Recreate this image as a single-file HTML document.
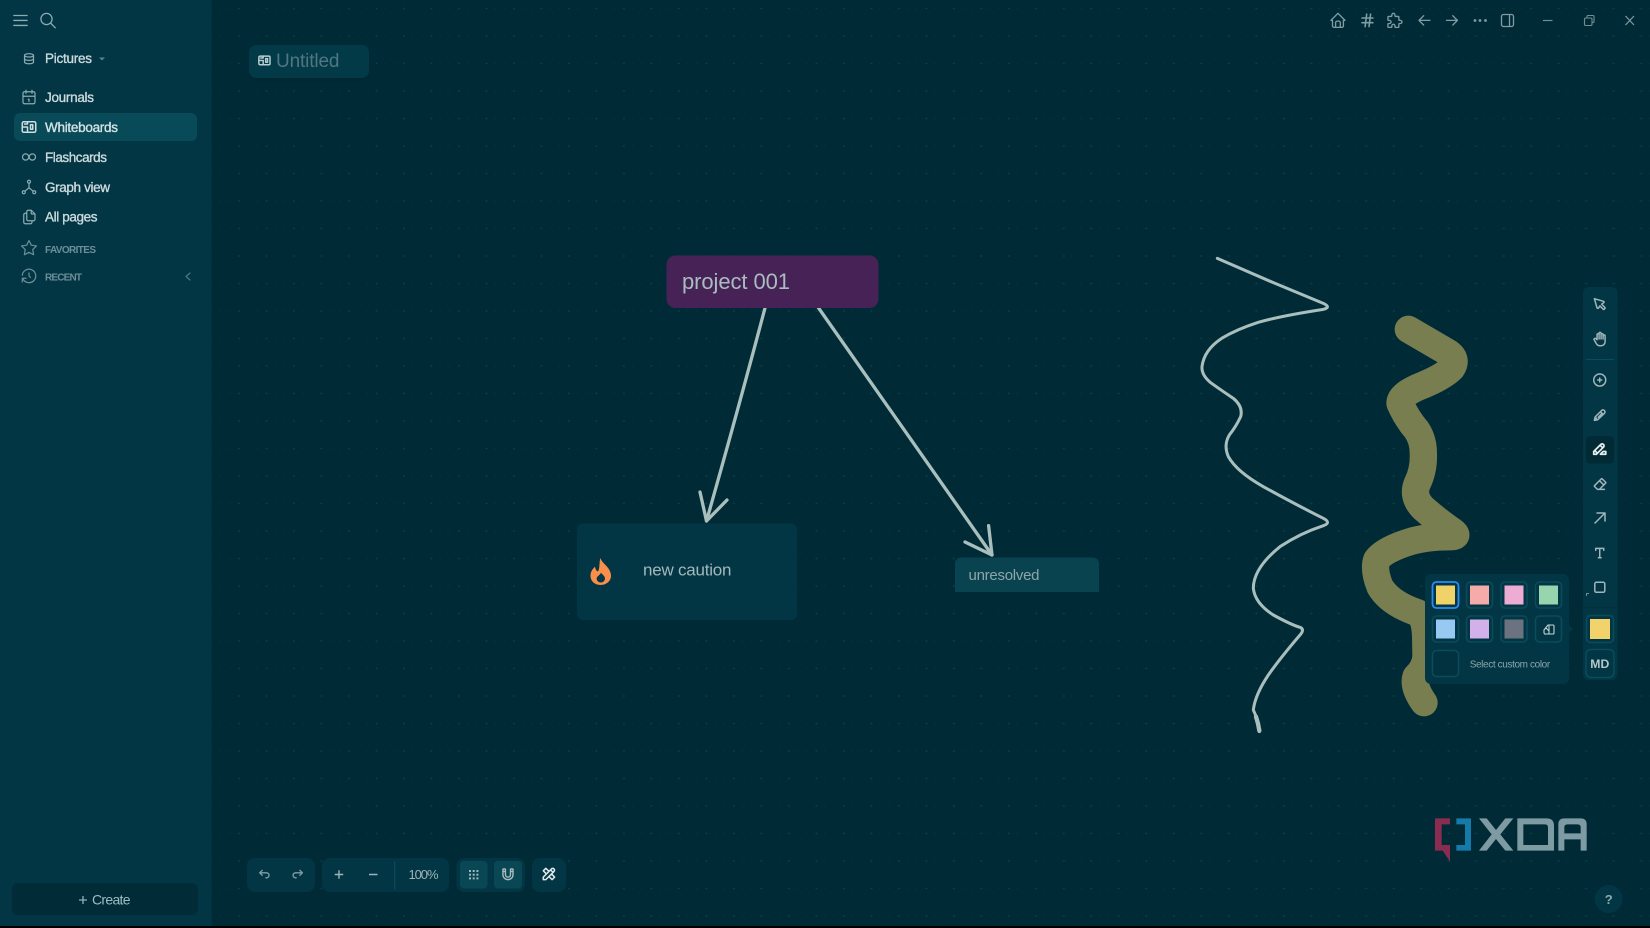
<!DOCTYPE html>
<html lang="en">
<head>
<meta charset="utf-8">
<title>Whiteboard</title>
<style>
html,body{margin:0;padding:0;width:1650px;height:928px;overflow:hidden;background:#000}
#bg{position:absolute;left:212px;top:0;width:1438px;height:926px;background-color:#002b36;
background-image:radial-gradient(circle at center,#0a4551 0,#0a4551 .5px,transparent 1px),radial-gradient(circle at center,#05343f 0,#05343f .4px,transparent .9px);
background-size:27.5px 27.5px,9.17px 27.5px;background-position:13.25px -5.25px,4px -5.25px}
svg{position:absolute;left:0;top:0;filter:blur(.35px)}
text{font-family:"Liberation Sans",sans-serif}
.side{font-size:13.5px;fill:#cbdadd;stroke:#cbdadd;stroke-width:.35px}
.sec{font-size:10px;font-weight:700;fill:#6c8f97}
.i{fill:none;stroke:#8dabb1;stroke-width:1.6;stroke-linecap:round;stroke-linejoin:round}
.t{fill:none;stroke:#7f9da3;stroke-width:1.7;stroke-linecap:round;stroke-linejoin:round}
.b{fill:none;stroke:#a9bdc0;stroke-width:2.2;stroke-linecap:round;stroke-linejoin:round}
.sw{fill:#023644;stroke:#0a4c5c;stroke-width:1.5}
</style>
</head>
<body>
<div id="bg"></div>
<svg width="1650" height="928" viewBox="0 0 1650 928" xmlns="http://www.w3.org/2000/svg">
<rect x="0" y="0" width="212" height="926" fill="#023644"/>
<rect x="211" y="0" width="1" height="926" fill="#02303c"/>
<rect x="14" y="113" width="183" height="28" rx="6" fill="#094a59"/>
<g class="i" transform="translate(10.5,10.5) scale(.83)"><path d="M4 6h16M4 12h16M4 18h16"/></g>
<g class="i" transform="translate(38.5,11) scale(.8)"><circle cx="10" cy="10" r="7"/><path d="M21 21l-6 -6"/></g>
<g class="i" transform="translate(22.3,52) scale(.56)" style="stroke-width:2.2"><ellipse cx="12" cy="6" rx="8" ry="3"/><path d="M4 6v6a8 3 0 0 0 16 0v-6"/><path d="M4 12v6a8 3 0 0 0 16 0v-6"/></g>
<text x="45" y="63" class="side" textLength="47" lengthAdjust="spacing">Pictures</text>
<path d="M99 57.5h6l-3 3z" fill="#5f8088"/>
<g class="i" transform="translate(20,88) scale(.75)"><path d="M4 7a2 2 0 0 1 2 -2h12a2 2 0 0 1 2 2v12a2 2 0 0 1 -2 2h-12a2 2 0 0 1 -2 -2v-12zM16 3v4M8 3v4M4 11h16M11 15h1v3"/></g>
<text x="45" y="102" class="side" textLength="49" lengthAdjust="spacing">Journals</text>
<g class="i" transform="translate(20,118) scale(.75)" style="stroke:#cfdde0;stroke-width:2"><rect x="3" y="5" width="18" height="14" rx="2"/><path d="M3 12h7v7M10 5v3H6M14 9h3v6h-3z"/></g>
<text x="45" y="132" class="side" textLength="73" lengthAdjust="spacing" style="fill:#d5e2e4;stroke:#d5e2e4">Whiteboards</text>
<g class="i" transform="translate(20,148) scale(.75)"><circle cx="7.5" cy="12" r="4.2"/><circle cx="16.5" cy="12" r="4.2"/></g>
<text x="45" y="162" class="side" textLength="62" lengthAdjust="spacing">Flashcards</text>
<g class="i" transform="translate(20,178) scale(.75)"><circle cx="12" cy="5" r="2"/><circle cx="5" cy="19" r="2"/><circle cx="19" cy="19" r="2"/><path d="M12 7v6M12 13l-5.5 4.6M12 13l5.5 4.6"/></g>
<text x="45" y="192" class="side" textLength="65" lengthAdjust="spacing">Graph view</text>
<g class="i" transform="translate(20,208) scale(.75)"><path d="M15 3v4a1 1 0 0 0 1 1h4M18 17h-7a2 2 0 0 1 -2 -2v-10a2 2 0 0 1 2 -2h4l5 5v7a2 2 0 0 1 -2 2zM16 17v2a2 2 0 0 1 -2 2h-7a2 2 0 0 1 -2 -2v-10a2 2 0 0 1 2 -2h2"/></g>
<text x="45" y="221.5" class="side" textLength="52.5" lengthAdjust="spacing">All pages</text>
<g class="i" transform="translate(20,239) scale(.75)" style="stroke:#6c8f97"><path d="M12 17.75l-6.172 3.245l1.179 -6.873l-5 -4.867l6.9 -1l3.086 -6.253l3.086 6.253l6.9 1l-5 4.867l1.179 6.873z"/></g>
<text x="45" y="253" class="sec" textLength="51" lengthAdjust="spacing">FAVORITES</text>
<g class="i" transform="translate(20,267) scale(.75)" style="stroke:#6c8f97"><path d="M12 8l0 4l2 2M3.05 11a9 9 0 1 1 .5 4m-.5 5v-5h5"/></g>
<text x="45" y="280.5" class="sec" textLength="37" lengthAdjust="spacing">RECENT</text>
<path d="M190 273l-4 3.5l4 3.5" fill="none" stroke="#4f7680" stroke-width="1.2" stroke-linecap="round" stroke-linejoin="round"/>
<rect x="12" y="883" width="186" height="32" rx="6" fill="#012b37"/>
<path d="M79 900h8M83 896v8" stroke="#8fb0b8" stroke-width="1.3" fill="none"/>
<text x="92" y="904.5" font-size="14" fill="#9dbdc5" textLength="38.5" lengthAdjust="spacing">Create</text>

<rect x="249" y="48" width="120" height="33" rx="7" fill="#002530" opacity=".6"/>
<rect x="249" y="45" width="120" height="33" rx="7" fill="#033a47"/>
<g class="i" transform="translate(257,53) scale(.62)" style="stroke:#b7cdd0;stroke-width:2.4"><rect x="3" y="5" width="18" height="14" rx="2"/><path d="M3 12h7v7M10 5v3H6M14 9h3v6h-3z"/></g>
<text x="276" y="67" font-size="19" fill="#4f7682" textLength="63.5" lengthAdjust="spacing">Untitled</text>

<g class="t" transform="translate(1328.6,11) scale(.78)"><path d="M5 12l-2 0l9 -9l9 9l-2 0M5 12v7a2 2 0 0 0 2 2h10a2 2 0 0 0 2 -2v-7M9 21v-6a2 2 0 0 1 2 -2h2a2 2 0 0 1 2 2v6"/></g>
<g class="t" transform="translate(1358.1,11) scale(.78)" style="stroke-width:2"><path d="M5 9h14M5 15h14M11 4l-2 16M16 4l-2 16"/></g>
<g class="t" transform="translate(1385.6,11) scale(.78)"><path d="M4 7h3a1 1 0 0 0 1 -1v-1a2 2 0 0 1 4 0v1a1 1 0 0 0 1 1h3a1 1 0 0 1 1 1v3a1 1 0 0 0 1 1h1a2 2 0 0 1 0 4h-1a1 1 0 0 0 -1 1v3a1 1 0 0 1 -1 1h-3a1 1 0 0 1 -1 -1v-1a2 2 0 0 0 -4 0v1a1 1 0 0 1 -1 1h-3a1 1 0 0 1 -1 -1v-3a1 1 0 0 1 1 -1h1a2 2 0 0 0 0 -4h-1a1 1 0 0 1 -1 -1v-3a1 1 0 0 1 1 -1"/></g>
<g class="t" transform="translate(1415.1,11) scale(.78)"><path d="M5 12h14M5 12l6 6M5 12l6 -6"/></g>
<g class="t" transform="translate(1442.6,11) scale(.78)"><path d="M5 12h14M13 18l6 -6M13 6l6 6"/></g>
<g fill="#7f9da3"><circle cx="1475" cy="20.5" r="1.4"/><circle cx="1480" cy="20.5" r="1.4"/><circle cx="1485.5" cy="20.5" r="1.4"/></g>
<rect x="1501.5" y="14.5" width="12" height="12" rx="2" fill="none" stroke="#7f9da3" stroke-width="1.3"/>
<path d="M1509.5 14.5v12" stroke="#7f9da3" stroke-width="1.3"/>
<path d="M1543 20.5h9.5" stroke="#6f8e95" stroke-width="1.2"/>
<rect x="1584.5" y="18" width="7.5" height="7.5" rx="1.2" fill="none" stroke="#6f8e95" stroke-width="1.1"/>
<path d="M1587 17.5v-1a1 1 0 0 1 1 -1h5a1 1 0 0 1 1 1v5a1 1 0 0 1 -1 1h-1" fill="none" stroke="#6f8e95" stroke-width="1.1"/>
<path d="M1625.5 16l8.5 9M1634 16l-8.5 9" stroke="#7f9da3" stroke-width="1.2"/>

<g fill="none" stroke="#a9bfbd" stroke-width="3.3" stroke-linecap="round" stroke-linejoin="round">
<path d="M765 308Q738 410 706.5 521"/>
<path d="M700 492L706.5 521L727 500"/>
<path d="M818.6 308L992 555"/>
<path d="M988.6 525.7L992 555L965 542"/>
</g>

<rect x="666.5" y="255.5" width="212" height="52.5" rx="9" fill="#472256"/>
<text x="682" y="289" font-size="22" fill="#a9bcbf" textLength="108" lengthAdjust="spacing">project 001</text>
<rect x="577" y="523.5" width="220" height="96.5" rx="6" fill="#033644"/>
<g transform="translate(600.5,557.7) scale(1,.91) translate(-600.5,-580)">
<path d="M600.5 580C601 586 611 590 611 600C611 606 606 610 600.5 610C595 610 590.5 606 590.5 600C590.5 595 593 592 595 590C595.5 593 596.5 595 598 595C600 592 599 585 600.5 580Z" fill="#f98f49"/>
<path d="M601 596.5C603 599 605 600.5 605 603a4.2 4.2 0 0 1 -8.4 0C596.600 600.5 599.5 599.5 601 596.5Z" fill="#033644"/>
</g>
<text x="643" y="575.5" font-size="17" fill="#a3b8bb" textLength="88.5" lengthAdjust="spacing">new caution</text>
<path d="M955 592v-28.5a6 6 0 0 1 6 -6h132a6 6 0 0 1 6 6v28.500z" fill="#0a4350"/>
<text x="968.5" y="580" font-size="15" fill="#8ea5a8" textLength="71" lengthAdjust="spacing">unresolved</text>

<g transform="translate(1180,240) scale(.33333)" fill="none" stroke-linecap="round" stroke-linejoin="round">
<path stroke="#a9bfbd" stroke-width="9" d="M112 55L280 128L430 190Q455 202 430 208Q300 228 235 247Q170 268 125 295Q72 330 66 380Q64 405 92 428Q130 455 160 475Q190 500 182 530Q168 560 148 585Q130 615 145 650Q170 695 250 740Q350 795 430 835Q455 848 430 857Q360 880 300 920Q220 985 220 1045Q225 1090 280 1125Q335 1155 360 1162Q375 1168 360 1185Q300 1255 265 1305Q225 1365 220 1410Q235 1440 238 1475"/>
<path stroke="#a9bfbd" stroke-width="13" d="M228 1430Q235 1450 238 1472"/>
<path stroke="#787e50" stroke-width="82" d="M685 268L800 335Q835 355 815 385Q790 410 730 435Q660 462 660 490Q680 535 710 570Q730 600 730 640Q732 690 712 730Q695 770 730 805Q770 840 810 868Q845 890 810 890Q740 890 690 905Q610 930 590 960Q580 990 600 1040Q630 1090 712 1118Q735 1130 737 1190L738 1250Q735 1285 708 1310Q698 1340 732 1388"/>
</g>

<rect x="1425" y="574" width="144" height="110" rx="6" fill="#033644"/>
<path d="M1569 625l4 4l-4 4z" fill="#033644"/>
<rect x="1432.5" y="582" width="26" height="26" rx="4" fill="#023644" stroke="#2a8cf0" stroke-width="1.8"/>
<rect x="1436" y="585.5" width="19" height="19" fill="#f0d368"/>
<rect x="1466.5" y="582" width="26" height="26" rx="4" class="sw"/>
<rect x="1470" y="585.5" width="19" height="19" fill="#f6abab"/>
<rect x="1501" y="582" width="26" height="26" rx="4" class="sw"/>
<rect x="1504.5" y="585.5" width="19" height="19" fill="#edacd4"/>
<rect x="1535.5" y="582" width="26" height="26" rx="4" class="sw"/>
<rect x="1539" y="585.5" width="19" height="19" fill="#97d5ae"/>
<rect x="1432.5" y="616" width="26" height="26" rx="4" class="sw"/>
<rect x="1436" y="619.5" width="19" height="19" fill="#98c9f3"/>
<rect x="1466.5" y="616" width="26" height="26" rx="4" class="sw"/>
<rect x="1470" y="619.5" width="19" height="19" fill="#d2b1ea"/>
<rect x="1501" y="616" width="26" height="26" rx="4" class="sw"/>
<rect x="1504.5" y="619.5" width="19" height="19" fill="#6b7280"/>
<rect x="1535.5" y="616" width="26" height="26" rx="4" class="sw"/>
<path d="M1544 630l4-5h5a1 1 0 0 1 1 1v7a1 1 0 0 1 -1 1h-7a1.5 1.5 0 0 1 -2 -1.5zM1549 625v9M1546 628l3 3" fill="none" stroke="#c4d4d6" stroke-width="1.1" stroke-linejoin="round"/>
<rect x="1432.5" y="650.5" width="26" height="26" rx="4" fill="#02323f" stroke="#0a4c5c" stroke-width="1.5"/>
<text x="1469.7" y="667.5" font-size="10" fill="#8ba6aa" textLength="80.5" lengthAdjust="spacing">Select custom color</text>

<rect x="1583" y="287" width="34.5" height="393" rx="6" fill="#033644"/>
<path d="M1586 359.5h28" stroke="#0a4c5c" stroke-width="1"/>
<path d="M1583 607.5h34.5" stroke="#02303c" stroke-width="1.2"/>
<rect x="1586" y="436" width="28" height="27.5" rx="4" fill="#012a35"/>
<g class="b" transform="translate(1591.7,296) scale(.67)" style="stroke:#9fb6ba"><path d="M7.9 17.56a1.2 1.2 0 0 0 2.23 .31l2.09 -3.09l4.91 4.91a1.07 1.07 0 0 0 1.51 0l1.05 -1.05a1.07 1.07 0 0 0 0 -1.51l-4.91 -4.91l3.11 -2.09a1.2 1.2 0 0 0 -.31 -2.23l-13.58 -3.9l3.9 13.56z"/></g>
<g class="b" transform="translate(1591.7,331) scale(.67)" style="stroke:#9fb6ba"><path d="M8 13v-7.5a1.5 1.5 0 0 1 3 0v6.5M11 5.5v-2a1.5 1.5 0 1 1 3 0v8.5M14 5.5a1.5 1.5 0 0 1 3 0v6.5M17 7.5a1.5 1.500 0 0 1 3 0v8.5a6 6 0 0 1 -6 6h-2h.21a6 6 0 0 1 -5.01 -2.7l-.2 -.3c-.31 -.48 -1.41 -2.39 -3.29 -5.73a1.5 1.5 0 0 1 .54 -2.02a1.87 1.87 0 0 1 2.28 .28l1.47 1.47"/></g>
<g class="b" transform="translate(1591.7,372) scale(.67)" style="stroke:#9fb6ba"><circle cx="12" cy="12" r="9"/><path d="M9 12h6M12 9v6"/></g>
<g class="b" transform="translate(1591.7,407) scale(.67)" style="stroke:#9fb6ba"><path d="M4 20l1 -5L15 5a3 3 0 0 1 4.2 4.2L9 19zM13 7l4 4M15 10l-5 5M5 19l2.500 -2.500"/></g>
<g class="b" transform="translate(1591.7,441.5) scale(.67)" style="stroke:#e6eff0;stroke-width:2.6"><path d="M3 19h4l10.5 -10.5a2.83 2.83 0 1 0 -4 -4l-10.5 10.500v4M12.5 5.5l4 4M4.500 13.500l4 4M21 15v4h-8l4 -4z"/></g>
<g class="b" transform="translate(1591.7,476) scale(.67)" style="stroke:#9fb6ba"><path d="M19 20h-10.5l-4.21 -4.3a1 1 0 0 1 0 -1.41l10 -10a1 1 0 0 1 1.41 0l5 5a1 1 0 0 1 0 1.41l-9.2 9.3M18 13.3l-6.3 -6.3"/></g>
<g class="b" transform="translate(1588,506)" style="stroke:#9fb6ba;stroke-width:1.5"><path d="M17 7l-10 10M9 7l8 0l0 8"/></g>
<g class="b" transform="translate(1591.7,545) scale(.67)" style="stroke:#9fb6ba"><path d="M10 19h4M12 5v14M6 8V5h12v3"/></g>
<rect x="1594.8" y="582.3" width="10" height="10" rx="1.5" fill="none" stroke="#9fb6ba" stroke-width="1.5"/>
<path d="M1589 593.5h-2.5v2.5" fill="none" stroke="#6f8e95" stroke-width="1"/>
<rect x="1586.5" y="615.5" width="27" height="27" rx="4" fill="#023644" stroke="#0a4c5c" stroke-width="1.5"/>
<rect x="1590" y="619" width="20" height="20" fill="#f2d36b"/>
<rect x="1586" y="649.5" width="28" height="28" rx="5" fill="#023644" stroke="#0a5060" stroke-width="1.3"/>
<text x="1590.3" y="667.8" font-size="12" font-weight="700" fill="#b4c8ca" textLength="19" lengthAdjust="spacingAndGlyphs">MD</text>

<rect x="247" y="858" width="68" height="34" rx="8" fill="#033644"/>
<rect x="322" y="858" width="127" height="34" rx="8" fill="#033644"/>
<rect x="456.5" y="858" width="68.5" height="34" rx="8" fill="#033644"/>
<rect x="532" y="858" width="34" height="34" rx="8" fill="#033644"/>
<rect x="460" y="861" width="27.5" height="27.5" rx="4" fill="#0a4754"/>
<rect x="494" y="861" width="28" height="27.5" rx="4" fill="#0a4754"/>
<path d="M394.7 861v28" stroke="#0a4c5c" stroke-width="1.2"/>
<g class="b" transform="translate(256.6,866.6) scale(.62)" style="stroke:#7f9da3"><path d="M9 14l-4 -4l4 -4M5 10h11a4 4 0 1 1 0 8h-1"/></g>
<g class="b" transform="translate(290.6,866.6) scale(.62)" style="stroke:#7f9da3"><path d="M15 14l4 -4l-4 -4M19 10h-11a4 4 0 1 0 0 8h1"/></g>
<path d="M334.8 874.5h8.4M339 870.3v8.4M369 874.5h8.500" fill="none" stroke="#9cb4b8" stroke-width="1.4"/>
<text x="408.5" y="879" font-size="13" fill="#9db3b7" textLength="30" lengthAdjust="spacing">100%</text>
<g fill="#9fb8bc"><rect x="469" y="870" width="2" height="2"/><rect x="472.7" y="870" width="2" height="2"/><rect x="476.4" y="870" width="2" height="2"/><rect x="469" y="873.7" width="2" height="2"/><rect x="472.7" y="873.7" width="2" height="2"/><rect x="476.4" y="873.7" width="2" height="2"/><rect x="469" y="877.4" width="2" height="2"/><rect x="472.7" y="877.4" width="2" height="2"/><rect x="476.4" y="877.4" width="2" height="2"/></g>
<g class="b" transform="translate(500.4,866.4) scale(.63)" style="stroke:#a9bdc0"><path d="M4 13v-8a1 1 0 0 1 1 -1h2a1 1 0 0 1 1 1v8a4 4 0 0 0 8 0v-8a1 1 0 0 1 1 -1h2a1 1 0 0 1 1 1v8a8 8 0 0 1 -16 0M4 8l4 0M16 8l4 0"/></g>
<g class="b" transform="translate(541.4,866.4) scale(.63)" style="stroke:#e0eaeb;stroke-width:2.4"><path d="M3 21h4l13 -13a1.500 1.500 0 0 0 -4 -4l-13 13v4M14.500 5.500l4 4M12 8l-5 -5l-4 4l5 5M16 12l5 5l-4 4l-5 -5"/></g>

<g transform="translate(1410,790) scale(.33333)">
<path d="M75 85H120V103H95V165H120V215L98 182H75Z" fill="#8a2c50"/>
<path d="M139 85H183V182H139V165H165V103H139Z" fill="#167aa8"/>
<g fill="#7e9aa3" fill-rule="evenodd">
<path d="M207 85H230L258 120L286 85H310L271 133L310 182H286L258 147L230 182H207L245 133Z"/>
<path d="M322 85H410Q432 85 432 107V182H322ZM340 103V165H414V112Q414 103 405 103Z"/>
<path d="M445 182V103Q445 85 463 85H512Q530 85 530 103V182H512V148H463V182ZM463 130H512V112Q512 103 503 103H472Q463 103 463 112Z"/>
</g>
</g>
<circle cx="1608.7" cy="899" r="14" fill="#023644"/>
<text x="1604.8" y="904" font-size="13" font-weight="700" fill="#8fa9ad">?</text>
</svg>
</body>
</html>
